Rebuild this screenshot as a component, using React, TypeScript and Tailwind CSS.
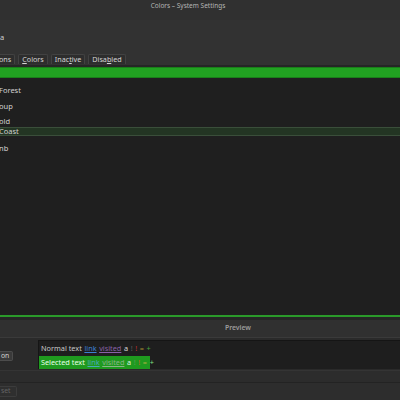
import React from "react";

const font = "font-['Noto_Sans','DejaVu_Sans',sans-serif]";

function Tab({ children, className = "" }: { children: React.ReactNode; className?: string }) {
  return (
    <div
      className={`h-[10px] flex items-center px-[3px] border border-b-0 border-[#424242] rounded-t-[2px] bg-[#2d2d2d] text-[#d4d4d4] text-[7.2px] leading-none whitespace-nowrap ${className}`}
    >
      {children}
    </div>
  );
}

export default function App() {
  return (
    <div className={`w-[400px] h-[400px] overflow-hidden bg-[#313131] flex flex-col ${font}`}>
      {/* title bar */}
      <div className="h-[20px] shrink-0 flex justify-center pr-[24px] pt-[2px] bg-[#303030]">
        <span className="text-[6.5px] leading-[8px] text-[#b5b5b5] whitespace-nowrap">Colors – System Settings</span>
      </div>
      {/* header */}
      <div className="h-[30px] shrink-0 bg-[#323232] pt-[13px]">
        <span className="block text-[7.5px] leading-[9px] text-[#d0d0d0]">a</span>
      </div>
      {/* tabs */}
      <div className="h-[15px] shrink-0 bg-[#323232] flex items-end gap-[3px] pb-[1px]">
        <Tab className="-ml-[2px] pl-0">ons</Tab>
        <Tab>
          <span><span className="underline">C</span>olors</span>
        </Tab>
        <Tab>
          <span>Inac<span className="underline">t</span>ive</span>
        </Tab>
        <Tab>
          <span>Disa<span className="underline">b</span>led</span>
        </Tab>
      </div>
      <div className="h-[2px] shrink-0 bg-[#262626]" />
      {/* list */}
      <div className="flex-1 min-h-0 bg-[#1f1f1f] flex flex-col text-[7.5px] leading-none text-[#d2d2d2]">
        <div className="h-[11px] shrink-0 bg-[#21a221] border-y border-[#1a7f1a]" />
        <div className="h-[13px] mt-[6px] flex items-center -ml-[1px]">Forest</div>
        <div className="h-[13px] mt-[3px] flex items-center -ml-[1px]">oup</div>
        <div className="h-[11px] mt-[3px] flex items-center -ml-[1px]">old</div>
        <div className="h-[9px] flex items-center -ml-[1px] bg-[#233523] border-y border-[#3a4e3a]">Coast</div>
        <div className="h-[13px] mt-[6px] flex items-center -ml-[1px]">nb</div>
      </div>
      <div className="h-[2px] shrink-0 bg-[#2a9a2a]" />
      <div className="h-[3px] shrink-0 bg-[#262626]" />
      {/* preview header */}
      <div className="h-[17px] shrink-0 bg-[#303030] flex items-center pl-[225px]">
        <span className="text-[6.8px] font-semibold text-[#9c9c9c]">Preview</span>
      </div>
      <div className="h-[1px] shrink-0 bg-[#3a3a3a]" />
      {/* preview row */}
      <div className="h-[32px] shrink-0 bg-[#2a2a2a] flex">
        <div className="w-[38px] shrink-0">
          <div className="mt-[13px] h-[10px] w-[13px] flex items-center pl-[1px] bg-[#3a3a3a] border border-l-0 border-[#4c4c4c] rounded-r-[2px] text-[6.8px] leading-none text-[#d2d2d2]">
            on
          </div>
        </div>
        <div className="flex-1 mt-[2px] mb-[1px] bg-[#1e1e1e] border-l border-t border-[#151515] pl-[2px] pt-[3px] text-[7.3px] leading-none whitespace-nowrap">
          <div className="h-[10px] flex items-center gap-[2.6px] text-[#c8c8c8]">
            <span>Normal text</span>
            <span className="underline text-[#3d80d2]">link</span>
            <span className="underline text-[#8a62a8]">visited</span>
            <span className="text-[#d8d8d8]">a</span>
            <span className="text-[#5a5a5a]">!</span>
            <span className="text-[#b83030]">!</span>
            <span className="text-[#a89030]">=</span>
            <span className="text-[#48a040]">+</span>
          </div>
          <div className="mt-[2px] -ml-[2px] h-[13px] w-[111px] flex items-center gap-[2.6px] pl-[2px] bg-[#1f9a1f] text-[#e6ffe6]">
            <span>Selected text</span>
            <span className="underline text-[#48a8b8]">link</span>
            <span className="underline text-[#88b488]">visited</span>
            <span className="text-[#e0f0e0]">a</span>
            <span className="text-[#58a058]">!</span>
            <span className="text-[#c05a30]">!</span>
            <span className="text-[#b0b040]">=</span>
            <span className="text-[#80e080]">+</span>
          </div>
        </div>
      </div>
      <div className="h-[12px] shrink-0 bg-[#2c2c2c] border-t border-[#343434]" />
      <div className="h-[1px] shrink-0 bg-[#232323]" />
      {/* bottom buttons */}
      <div className="h-[17px] shrink-0 bg-[#2d2d2d] pt-[3px]">
        <div className="h-[11px] w-[17px] flex items-center pl-[1px] bg-[#2f2f2f] border border-l-0 border-[#3c3c3c] rounded-r-[2px] text-[6.8px] leading-none text-[#666666]">
          set
        </div>
      </div>
    </div>
  );
}
